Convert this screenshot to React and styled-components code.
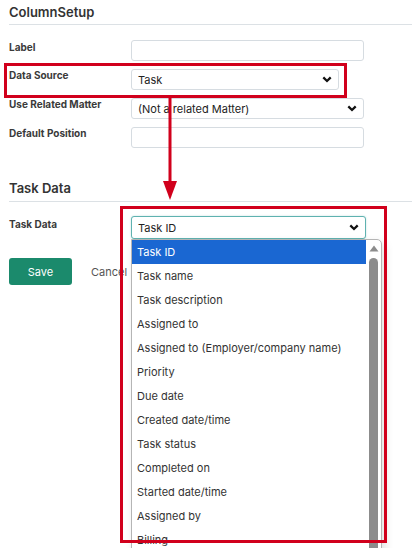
import React from "react";
import styled, { createGlobalStyle } from "styled-components";

const Global = createGlobalStyle`
  html, body { margin: 0; padding: 0; background: #fff; }
  body { font-family: Inter, "Noto Sans", sans-serif; color: #333; }
  * { box-sizing: border-box; }
`;

const Page = styled.div`
  position: relative;
  width: 412px;
  height: 548px;
  overflow: hidden;
  padding-left: 9px;
`;

const SectionTitle = styled.div`
  font-size: 13px;
  font-weight: 600;
  color: #333;
  line-height: 16px;
  padding-top: ${(p) => p.$top}px;
  padding-bottom: ${(p) => p.$bottom}px;
  border-bottom: 1px solid #dce1e5;
`;

const Form = styled.div`
  display: flex;
  flex-direction: column;
  gap: 8px;
  margin-top: ${(p) => p.$top}px;
`;

const Row = styled.div`
  display: grid;
  grid-template-columns: 122px auto;
  align-items: start;
`;

const Label = styled.div`
  font-size: 10px;
  font-weight: 700;
  color: #3a3a3a;
  line-height: 12px;
  padding-top: ${(p) => p.$pad || 0}px;
`;

const Input = styled.div`
  width: ${(p) => p.$w || 233}px;
  height: 21px;
  border: 1px solid #d6dce1;
  border-radius: 3px;
  background: #fff;
`;

const Select = styled.div`
  width: ${(p) => p.$w || 233}px;
  height: ${(p) => p.$h || 21}px;
  border: ${(p) => (p.$focus ? "1.5px solid #5fb2b0" : "1px solid #d6dce1")};
  border-radius: 3px;
  background: #fff;
  display: flex;
  align-items: center;
  justify-content: space-between;
  padding: 0 6px 0 6px;
  font-size: 11px;
  color: #222;
  box-shadow: ${(p) => (p.$focus ? "0 0 2px rgba(95,178,176,.4)" : "none")};
`;

const Chevron = () => (
  <svg width="10" height="7" viewBox="0 0 10 7">
    <path d="M1.3 1.4 L5 5 L8.7 1.4" fill="none" stroke="#111" strokeWidth="2.3" />
  </svg>
);

const Actions = styled.div`
  display: flex;
  align-items: center;
  gap: 19px;
  margin-top: 19px;
`;

const SaveButton = styled.div`
  width: 63px;
  height: 27px;
  background: #1b8a6c;
  border-radius: 3px;
  color: #fff;
  font-size: 11px;
  display: flex;
  align-items: center;
  justify-content: center;
`;

const CancelLink = styled.div`
  font-size: 11px;
  color: #555;
`;

const List = styled.div`
  position: absolute;
  left: 131px;
  top: 239px;
  width: 251px;
  height: 330px;
  border: 1px solid #b5b5b5;
  border-top-right-radius: 5px;
  background: #fff;
  box-shadow: 3px 4px 10px rgba(0, 0, 0, 0.12);
  display: flex;
`;

const Options = styled.div`
  flex: 1;
  display: flex;
  flex-direction: column;
`;

const Option = styled.div`
  height: 24px;
  line-height: 24px;
  padding-left: 5px;
  font-size: 11px;
  color: ${(p) => (p.$active ? "#fff" : "#333")};
  background: ${(p) => (p.$active ? "#1a67d2" : "transparent")};
  white-space: nowrap;
`;

const Scrollbar = styled.div`
  width: 15px;
  display: flex;
  flex-direction: column;
  align-items: center;
  padding-top: 5px;
`;

const Thumb = styled.div`
  width: 9px;
  flex: 1;
  margin-top: 6px;
  background: #8c8c8c;
  border-radius: 5px 5px 0 0;
`;

const Highlight = styled.div`
  position: absolute;
  left: ${(p) => p.$x}px;
  top: ${(p) => p.$y}px;
  width: ${(p) => p.$w}px;
  height: ${(p) => p.$h}px;
  border: 3px solid #d1001c;
  pointer-events: none;
`;

const Arrow = styled.svg`
  position: absolute;
  left: 160px;
  top: 96px;
`;

const options = [
  "Task ID",
  "Task name",
  "Task description",
  "Assigned to",
  "Assigned to (Employer/company name)",
  "Priority",
  "Due date",
  "Created date/time",
  "Task status",
  "Completed on",
  "Started date/time",
  "Assigned by",
  "Billing",
  "Billing type",
];

export default function App() {
  return (
    <>
      <Global />
      <Page>
        <SectionTitle $top={4} $bottom={4}>ColumnSetup</SectionTitle>
        <Form $top={15}>
          <Row>
            <Label $pad={1}>Label</Label>
            <Input />
          </Row>
          <Row>
            <Label $pad={0}>Data Source</Label>
            <Select $w={208}>
              Task
              <Chevron />
            </Select>
          </Row>
          <Row>
            <Label $pad={0}>Use Related Matter</Label>
            <Select>
              (Not a related Matter)
              <Chevron />
            </Select>
          </Row>
          <Row>
            <Label $pad={0}>Default Position</Label>
            <Input />
          </Row>
        </Form>
        <SectionTitle $top={32} $bottom={5}>Task Data</SectionTitle>
        <Form $top={14}>
          <Row>
            <Label $pad={2}>Task Data</Label>
            <Select $w={235} $h={23} $focus>
              Task ID
              <Chevron />
            </Select>
          </Row>
        </Form>
        <Actions>
          <SaveButton>Save</SaveButton>
          <CancelLink>Cancel</CancelLink>
        </Actions>

        <List>
          <Options>
            {options.map((o, i) => (
              <Option key={o} $active={i === 0}>
                {o}
              </Option>
            ))}
          </Options>
          <Scrollbar>
            <svg width="10" height="7" viewBox="0 0 10 7">
              <path d="M0.5 6.5 L5 0.5 L9.5 6.5 Z" fill="#8c8c8c" />
            </svg>
            <Thumb />
          </Scrollbar>
        </List>

        <Highlight $x={4} $y={63} $w={343} $h={35} />
        <Highlight $x={120} $y={206} $w={267} $h={337} />
        <Arrow width="20" height="106" viewBox="0 0 20 106">
          <rect x="8.5" y="0" width="3" height="88" fill="#d1001c" />
          <path d="M3 85 L17 85 L10 104 Z" fill="#d1001c" />
        </Arrow>
      </Page>
    </>
  );
}
